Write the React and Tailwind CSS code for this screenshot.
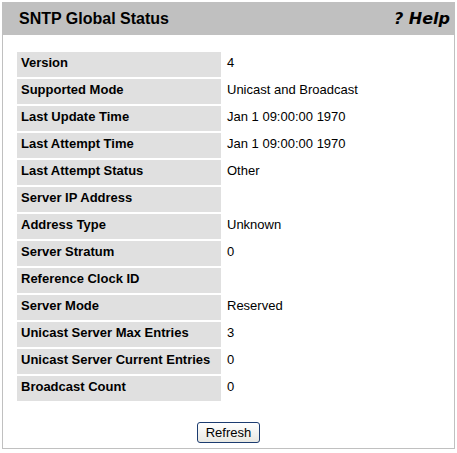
import React from 'react';

const rows = [
  ['Version', '4'],
  ['Supported Mode', 'Unicast and Broadcast'],
  ['Last Update Time', 'Jan 1 09:00:00 1970'],
  ['Last Attempt Time', 'Jan 1 09:00:00 1970'],
  ['Last Attempt Status', 'Other'],
  ['Server IP Address', ''],
  ['Address Type', 'Unknown'],
  ['Server Stratum', '0'],
  ['Reference Clock ID', ''],
  ['Server Mode', 'Reserved'],
  ['Unicast Server Max Entries', '3'],
  ['Unicast Server Current Entries', '0'],
  ['Broadcast Count', '0'],
];

export default function App() {
  return (
    <div className="bg-white w-[457px] h-[453px] pt-[2px] pl-[2px] font-['Liberation_Sans',Arial,sans-serif] text-black">
      <div className="w-[453px] h-[447px] border border-t-0 border-[#c0c0c0] flex flex-col">
        {/* title bar */}
        <div className="h-[33px] -mx-px bg-[#c0c0c0] flex items-center justify-between pl-[17px] pr-[5px]">
          <h1 className="text-[16px] font-bold leading-none">SNTP Global Status</h1>
          <span className="text-[16px] font-bold italic leading-none font-['DejaVu_Sans',Verdana,sans-serif]">? Help</span>
        </div>

        <table className="self-start ml-[12px] mt-[15px] border-separate border-spacing-[2px] text-[13px] leading-[15px]">
          <tbody>
            {rows.map(([label, value]) => (
              <tr key={label}>
                <td className="w-[204px] h-[25px] bg-[#e0e0e0] font-bold align-top pt-[3px] pl-[4px]">{label}</td>
                <td className="w-[220px] h-[25px] align-top pt-[3px] pl-[4px]">{value}</td>
              </tr>
            ))}
          </tbody>
        </table>

        <div className="flex justify-center mt-[19px]">
          <button className="w-[63px] h-[21px] border border-[#1c3c70] rounded-[3px] bg-gradient-to-b from-white to-[#e8e8e2] text-[13px] leading-none">
            Refresh
          </button>
        </div>
      </div>
    </div>
  );
}
